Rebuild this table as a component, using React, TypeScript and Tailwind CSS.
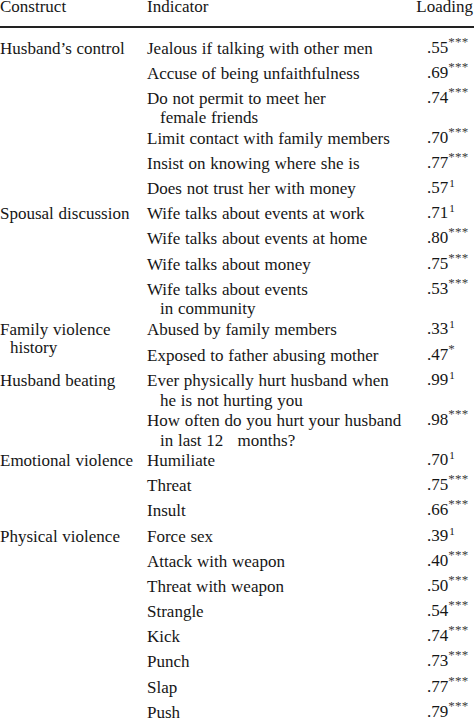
type Row = {
  construct?: string[]
  indicator: string[]
  value: string
  sup: string
  tall?: boolean
  h?: string
}

const rows: Row[] = [
  { construct: ['Husband’s control'], indicator: ['Jealous if talking with other men'], value: '.55', sup: '***' },
  { indicator: ['Accuse of being unfaithfulness'], value: '.69', sup: '***' },
  { indicator: ['Do not permit to meet her', 'female friends'], value: '.74', sup: '***', tall: true },
  { indicator: ['Limit contact with family members'], value: '.70', sup: '***' },
  { indicator: ['Insist on knowing where she is'], value: '.77', sup: '***' },
  { indicator: ['Does not trust her with money'], value: '.57', sup: '1' },
  { construct: ['Spousal discussion'], indicator: ['Wife talks about events at work'], value: '.71', sup: '1' },
  { indicator: ['Wife talks about events at home'], value: '.80', sup: '***' },
  { indicator: ['Wife talks about money'], value: '.75', sup: '***' },
  { indicator: ['Wife talks about events', 'in community'], value: '.53', sup: '***', tall: true },
  { construct: ['Family violence', 'history'], indicator: ['Abused by family members'], value: '.33', sup: '1', h: 'h-[26.6px]' },
  { indicator: ['Exposed to father abusing mother'], value: '.47', sup: '*' },
  { construct: ['Husband beating'], indicator: ['Ever physically hurt husband when', 'he is not hurting you'], value: '.99', sup: '1', tall: true },
  { indicator: ['How often do you hurt your husband', 'in last 12\u00a0\u00a0 months?'], value: '.98', sup: '***', tall: true },
  { construct: ['Emotional violence'], indicator: ['Humiliate'], value: '.70', sup: '1' },
  { indicator: ['Threat'], value: '.75', sup: '***' },
  { indicator: ['Insult'], value: '.66', sup: '***' },
  { construct: ['Physical violence'], indicator: ['Force sex'], value: '.39', sup: '1' },
  { indicator: ['Attack with weapon'], value: '.40', sup: '***' },
  { indicator: ['Threat with weapon'], value: '.50', sup: '***' },
  { indicator: ['Strangle'], value: '.54', sup: '***' },
  { indicator: ['Kick'], value: '.74', sup: '***' },
  { indicator: ['Punch'], value: '.73', sup: '***' },
  { indicator: ['Slap'], value: '.77', sup: '***' },
  { indicator: ['Push'], value: '.79', sup: '***' },
]

function TableRow({ row }: { row: Row }) {
  const height = row.h ?? (row.tall ? 'h-[39.8px]' : 'h-[25.2px]')
  const stars = row.sup.startsWith('*')
  return (
    <div className={`flex ${height} pt-[2.5px]`}>
      <div className="w-[147px] shrink-0 whitespace-nowrap">
        {row.construct?.map((line, i) => (
          <div key={i} className={i > 0 ? 'pl-[10px] -mt-[1px]' : ''}>
            {line}
          </div>
        ))}
      </div>
      <div className="flex-1 whitespace-nowrap">
        {row.indicator.map((line, i) => (
          <div key={i} className={i > 0 ? 'pl-[13px]' : ''}>
            {line}
          </div>
        ))}
      </div>
      <div className="w-[47px] shrink-0 whitespace-nowrap -mt-[1px] [word-spacing:0]">
        {row.value}
        {stars ? (
          <span className="relative -top-[7px] text-[13px] text-[#3a3a3a] tracking-[0.3px] leading-none">
            {row.sup}
          </span>
        ) : (
          <span className="relative -top-[6px] text-[11px] ml-[1px] leading-none">{row.sup}</span>
        )}
      </div>
    </div>
  )
}

export default function App() {
  return (
    <div
      className="w-[474px] h-[721px] overflow-hidden bg-white text-[#161616] text-[17px] leading-[19.5px] [word-spacing:0.5px]"
      style={{ fontFamily: '"Liberation Serif", "Times New Roman", serif' }}
    >
      <div className="flex -mt-[3px]">
        <div className="w-[147px] shrink-0">Construct</div>
        <div className="flex-1">Indicator</div>
        <div className="pr-[1px]">Loading</div>
      </div>
      <div className="mt-[9.5px] h-[2px] bg-[#222]" />
      <div className="mt-[8px]">
        {rows.map((row, i) => (
          <TableRow key={i} row={row} />
        ))}
      </div>
    </div>
  )
}
